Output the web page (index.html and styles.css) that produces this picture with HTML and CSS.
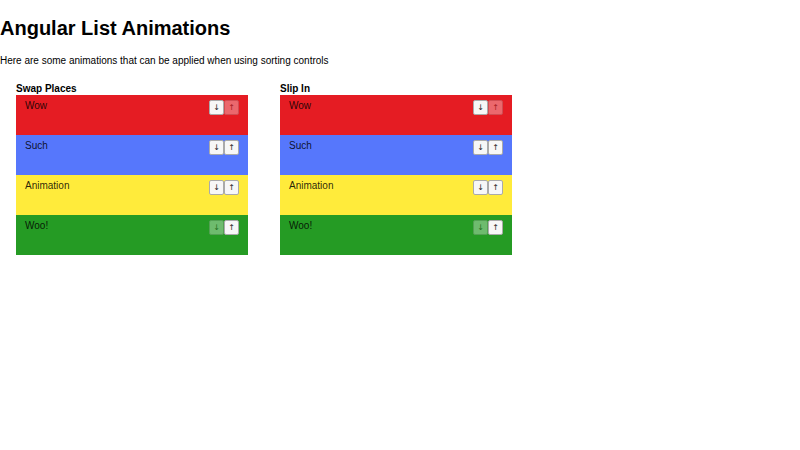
FILE: index.html
```html
<!DOCTYPE html>
<html>
<head>
<meta charset="utf-8">
<link rel="stylesheet" href="styles.css">
</head>
<body>
<h1 class="title">Angular List Animations</h1>
<p class="intro">Here are some animations that can be applied when using sorting controls</p>
<div class="lists">
  <div class="group">
    <div class="label">Swap Places</div>
    <div class="list">
      <div class="item red"><span class="name">Wow</span><div class="ctrls"><button class="btn">↓</button><button class="btn" disabled>↑</button></div></div>
      <div class="item blue"><span class="name">Such</span><div class="ctrls"><button class="btn">↓</button><button class="btn">↑</button></div></div>
      <div class="item yellow"><span class="name">Animation</span><div class="ctrls"><button class="btn">↓</button><button class="btn">↑</button></div></div>
      <div class="item green"><span class="name">Woo!</span><div class="ctrls"><button class="btn" disabled>↓</button><button class="btn">↑</button></div></div>
    </div>
  </div>
  <div class="group">
    <div class="label">Slip In</div>
    <div class="list">
      <div class="item red"><span class="name">Wow</span><div class="ctrls"><button class="btn">↓</button><button class="btn" disabled>↑</button></div></div>
      <div class="item blue"><span class="name">Such</span><div class="ctrls"><button class="btn">↓</button><button class="btn">↑</button></div></div>
      <div class="item yellow"><span class="name">Animation</span><div class="ctrls"><button class="btn">↓</button><button class="btn">↑</button></div></div>
      <div class="item green"><span class="name">Woo!</span><div class="ctrls"><button class="btn" disabled>↓</button><button class="btn">↑</button></div></div>
    </div>
  </div>
</div>
</body>
</html>
```
FILE: styles.css
```css
body {
  margin: 0;
  font-family: "Liberation Sans", Arial, sans-serif;
  font-size: 10px;
  color: #000;
  background: #fff;
}
.title {
  font-size: 20px;
  font-weight: bold;
  margin: 16px 0 0 0;
  line-height: 24px;
}
.intro {
  margin: 15px 0 0 0;
  line-height: 12px;
}
.lists {
  display: flex;
  gap: 32px;
  padding-left: 16px;
  margin-top: 15px;
}
.group {
  width: 232px;
}
.label {
  font-weight: bold;
  line-height: 13px;
}
.list {
  display: flex;
  flex-direction: column;
}
.item {
  height: 40px;
  box-sizing: border-box;
  padding: 5px 9px 0 9px;
  display: flex;
  justify-content: space-between;
  align-items: flex-start;
  color: rgba(0,0,0,0.85);
  line-height: 12px;
}
.red { background: #e51c23; }
.blue { background: #5677fc; }
.yellow { background: #ffeb3b; }
.green { background: #259b24; }
.ctrls {
  display: flex;
}
.btn {
  width: 15px;
  height: 15px;
  padding: 0;
  margin: 0;
  border: 1px solid #aaa;
  border-radius: 2px;
  background: #f7f7f7;
  font-family: "DejaVu Sans", sans-serif;
  font-size: 8px;
  line-height: 13px;
  color: #222;
  text-align: center;
}
.btn:disabled {
  opacity: 0.35;
}
```
